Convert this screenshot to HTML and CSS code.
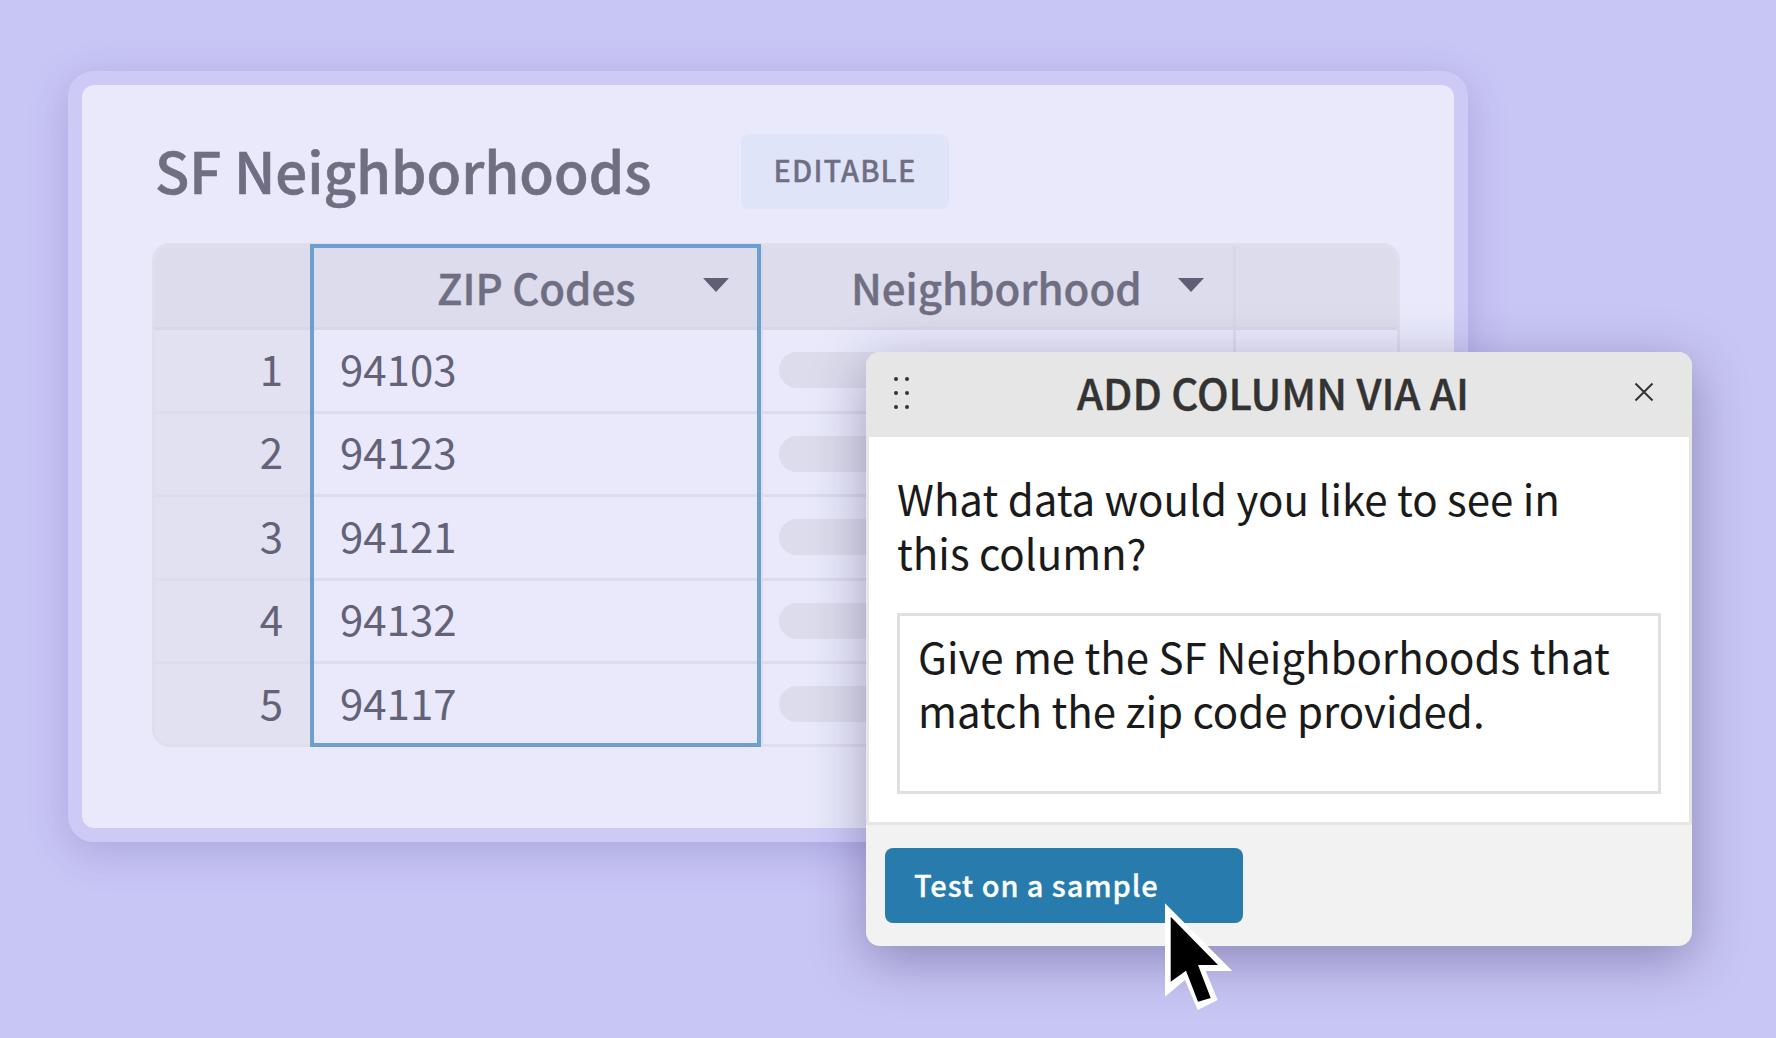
FILE: index.html
```html
<!DOCTYPE html>
<html lang="en">
<head>
    <meta charset="UTF-8">
    <meta name="viewport" content="width=device-width, initial-scale=1.0">
    <title>Add column via AI</title>
    <link rel="stylesheet" href="styles.css">
</head>
<body>
    <div class="stage">
        <div class="card">
            <div class="card-head">
                <h1>SF Neighborhoods</h1>
                <span class="badge">EDITABLE</span>
            </div>

            <div class="table">
                <div class="selection"></div>

                <div class="cell head first"></div>
                <div class="cell head head-zip">ZIP Codes <span class="caret"></span></div>
                <div class="cell head head-name">Neighborhood <span class="caret"></span></div>
                <div class="cell head last"></div>

                <div class="cell num">1</div>
                <div class="cell zip">94103</div>
                <div class="cell name"><span class="pill"></span></div>
                <div class="cell last"></div>

                <div class="cell num">2</div>
                <div class="cell zip">94123</div>
                <div class="cell name"><span class="pill"></span></div>
                <div class="cell last"></div>

                <div class="cell num">3</div>
                <div class="cell zip">94121</div>
                <div class="cell name"><span class="pill"></span></div>
                <div class="cell last"></div>

                <div class="cell num">4</div>
                <div class="cell zip">94132</div>
                <div class="cell name"><span class="pill"></span></div>
                <div class="cell last"></div>

                <div class="cell num end">5</div>
                <div class="cell zip">94117</div>
                <div class="cell name"><span class="pill"></span></div>
                <div class="cell last"></div>
            </div>
        </div>

        <div class="dialog">
            <div class="dialog-head">
                <div class="grip">
                    <i></i><i></i><i></i><i></i><i></i><i></i>
                </div>
                <h2>ADD COLUMN VIA AI</h2>
                <svg class="close" width="20" height="20" viewBox="0 0 20 20">
                    <path d="M1.5 1.5 L18.5 18.5 M18.5 1.5 L1.5 18.5" stroke="#333" stroke-width="2" fill="none"/>
                </svg>
            </div>
            <div class="dialog-body">
                <p class="question">What data would you like to see in this column?</p>
                <div class="prompt">Give me the SF Neighborhoods that match the zip code provided.</div>
            </div>
            <div class="dialog-foot">
                <button class="btn">Test on a sample</button>
            </div>
        </div>

        <svg class="cursor" width="80" height="115" viewBox="0 0 80 115">
            <polygon points="5,3.3 72.3,71 45.7,71 57.7,100 37.7,110 25,80 5,96.7" fill="#fff"/>
            <polygon points="10.7,16.7 58,65 38,65 50.7,98 38,101.7 26,70.7 10.7,81.7" fill="#000"/>
        </svg>
    </div>
</body>
</html>
```

FILE: styles.css
```css
/* General Styles */
html, body {
    margin: 0;
    height: 100%;
}

body {
    font-family: "Noto Sans CJK SC", "Noto Sans", sans-serif;
    background-color: #c8c6f4;
    overflow: hidden;
}

.stage {
    position: relative;
    height: 1038px;
    padding: 71px 0 0 68px;
    box-sizing: border-box;
}

/* Table card */
.card {
    width: 1400px;
    height: 771px;
    box-sizing: border-box;
    padding: 49px 54px 0 70px;
    background-color: #e9e9fb;
    background-clip: padding-box;
    border: 14px solid #cdcbf6;
    border-radius: 26px;
    box-shadow: 0 10px 40px rgba(70, 60, 150, 0.22);
}

.card-head {
    display: flex;
    align-items: center;
    height: 75px;
    margin-bottom: 34px;
    margin-left: 3px;
}

h1 {
    margin: 0 0 4px;
    width: 586px;
    font-size: 56.4px;
    font-weight: 500;
    -webkit-text-stroke: 0.6px #6f6e82;
    color: #6f6e82;
    white-space: nowrap;
}

.badge {
    display: flex;
    align-items: center;
    justify-content: center;
    width: 208px;
    height: 75px;
    padding-bottom: 6px;
    box-sizing: border-box;
    font-size: 29px;
    font-weight: 500;
    letter-spacing: 1.1px;
    -webkit-text-stroke: 0.3px #6f6e82;
    color: #6f6e82;
    background-color: #e0e4f8;
    border-radius: 8px;
}

.table {
    position: relative;
    display: grid;
    grid-template-columns: 158px 450px 473px 1fr;
    grid-template-rows: 84px repeat(4, 83.5px) 80px;
    width: 1248px;
    box-sizing: border-box;
    border: 3px solid #dedeed;
    border-radius: 18px;
    font-size: 42px;
    color: #636277;
}

.cell {
    display: flex;
    align-items: center;
    box-sizing: border-box;
    border-bottom: 3px solid #dcdcec;
    border-right: 3px solid #dcdcec;
}

.cell:nth-last-child(-n+4) {
    border-bottom: 0;
}

.cell.last {
    border-right: 0;
}

.head {
    background-color: #dcdcec;
    border-bottom-color: #d7d7e8;
    border-right-color: #d7d7e8;
    font-weight: 500;
    -webkit-text-stroke: 0.4px #6f6e82;
    color: #6f6e82;
}

.head.first {
    border-top-left-radius: 15px;
    border-right: 0;
}

.head.last {
    border-top-right-radius: 15px;
}

.head-zip {
    padding-left: 124px;
    position: relative;
}

.head-name {
    padding-left: 88px;
    position: relative;
}

.caret {
    position: absolute;
    top: 32px;
    width: 0;
    height: 0;
    border-left: 13px solid transparent;
    border-right: 13px solid transparent;
    border-top: 14px solid #5f5e74;
}

.head-zip .caret {
    left: 390px;
}

.head-name .caret {
    left: 415px;
}

.num {
    justify-content: flex-end;
    padding-right: 27px;
    padding-bottom: 6px;
    background-color: #e1e1f2;
}

.num.end {
    border-bottom-left-radius: 15px;
}

.zip {
    padding-left: 27px;
    padding-bottom: 6px;
}

.name {
    padding-left: 16px;
}

.pill {
    display: block;
    width: 300px;
    height: 36px;
    border-radius: 18px;
    background-color: #dcdcec;
}

/* Selected column outline */
.selection {
    position: absolute;
    top: -2px;
    bottom: -3px;
    left: 155px;
    width: 451px;
    box-sizing: border-box;
    border: 4px solid #6a9fcf;
    z-index: 1;
}

/* Dialog */
.dialog {
    position: absolute;
    left: 866px;
    top: 352px;
    width: 826px;
    height: 594px;
    display: flex;
    flex-direction: column;
    background-color: #f2f2f2;
    border-radius: 14px;
    overflow: hidden;
    box-shadow: 0 14px 54px rgba(40, 35, 90, 0.38);
}

.dialog-head {
    position: relative;
    display: flex;
    align-items: center;
    justify-content: center;
    height: 85px;
    flex: none;
    padding: 0 12px 6px 0;
    box-sizing: border-box;
    background-color: #e6e6e6;
}

h2 {
    margin: 0;
    font-size: 42px;
    font-weight: 500;
    -webkit-text-stroke: 0.4px #333;
    color: #333;
}

.grip {
    position: absolute;
    left: 28px;
    top: 25px;
    display: grid;
    grid-template-columns: 4px 4px;
    column-gap: 7px;
    row-gap: 10px;
}

.grip i {
    width: 4px;
    height: 4px;
    border-radius: 50%;
    background-color: #333;
}

.close {
    position: absolute;
    right: 38px;
    top: 30px;
}

.dialog-body {
    flex: none;
    height: 388px;
    box-sizing: border-box;
    padding: 34px 28px 0 28px;
    background-color: #fff;
    border: 3px solid #e6e6e6;
    border-top: 0;
}

.question {
    width: 680px;
    margin: 0 0 34px;
    font-size: 42px;
    line-height: 54px;
    color: #1a1a1a;
}

.prompt {
    box-sizing: border-box;
    height: 181px;
    padding: 13px 18px;
    border: 3px solid #e0e0e0;
    font-size: 42px;
    line-height: 54px;
    color: #1a1a1a;
}

.dialog-foot {
    flex: 1;
    padding: 23px 19px;
}

.btn {
    display: block;
    width: 358px;
    height: 75px;
    padding: 0 0 4px 29px;
    text-align: left;
    font-family: inherit;
    font-size: 29px;
    font-weight: 500;
    letter-spacing: 0.9px;
    -webkit-text-stroke: 0.3px #fff;
    color: #fff;
    background-color: #277cad;
    border: none;
    border-radius: 8px;
    cursor: pointer;
}

.cursor {
    position: absolute;
    left: 1160px;
    top: 900px;
}
```
